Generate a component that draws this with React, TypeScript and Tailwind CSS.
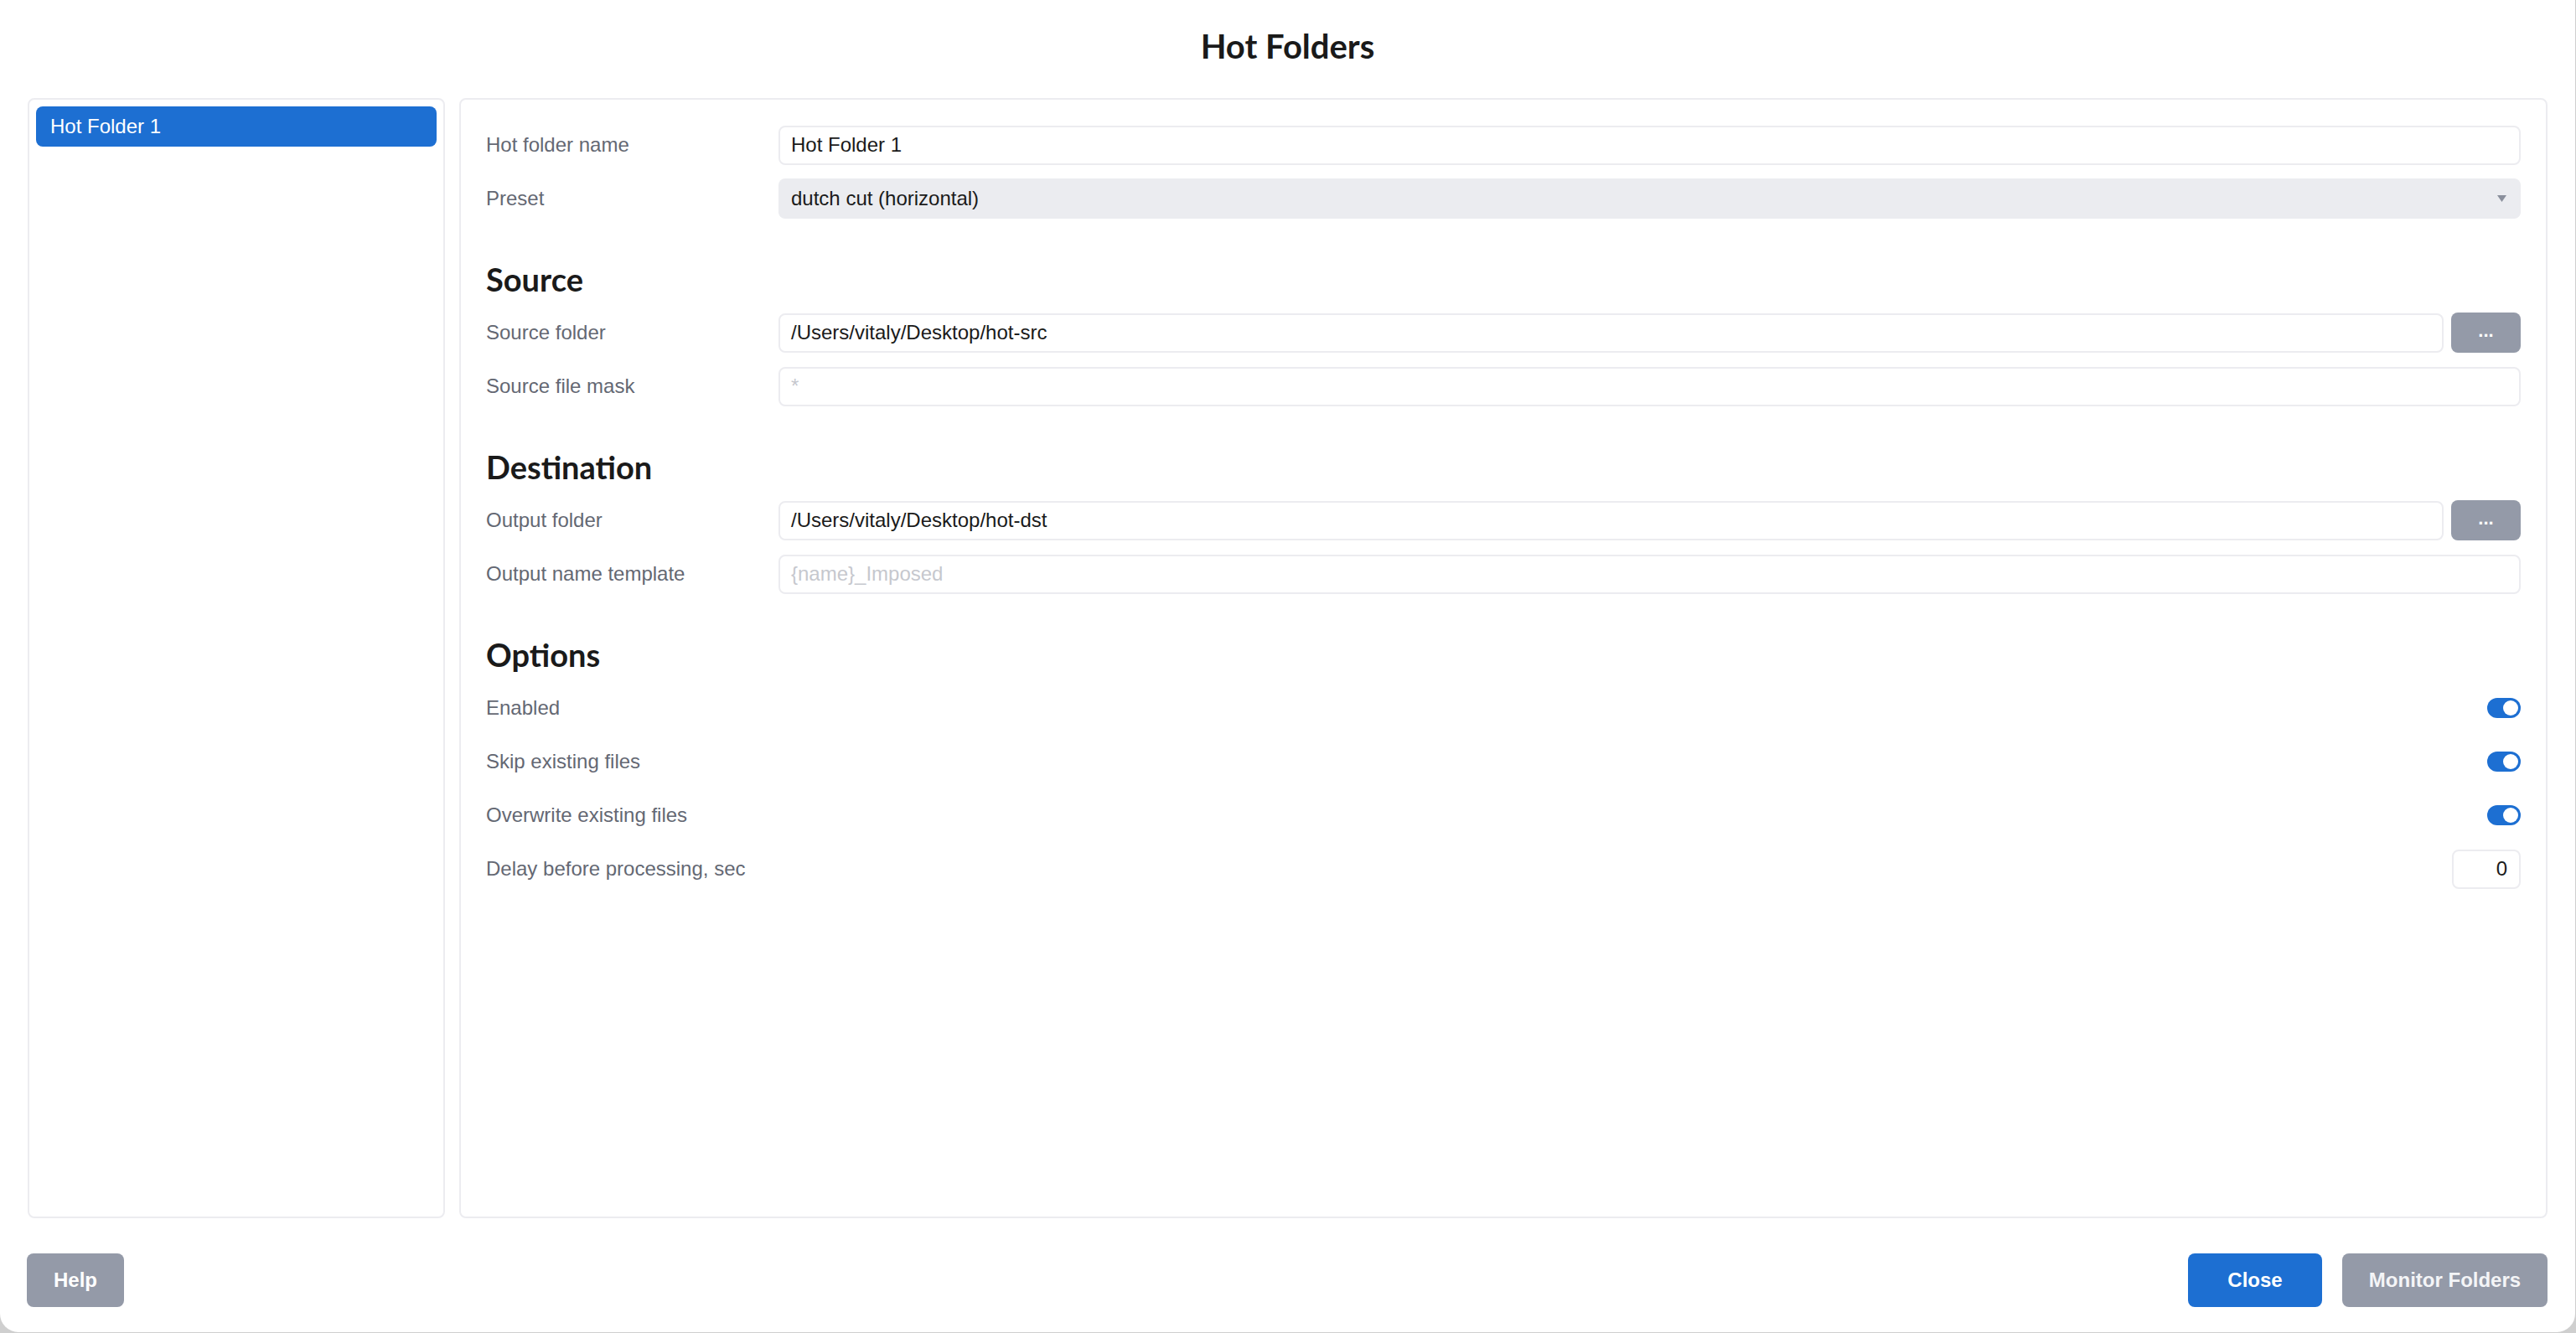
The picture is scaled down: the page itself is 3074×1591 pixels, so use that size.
import type { ReactNode } from 'react';

const sans = { fontFamily: '"Liberation Sans", Arial, sans-serif' };
const heading = { fontFamily: 'Lato, "Open Sans", sans-serif' };

function Row({ label, children }: { label: string; children: ReactNode }) {
  return (
    <div className="flex h-12 items-center">
      <div className="w-[349px] shrink-0 text-[24px] text-[#646873]">{label}</div>
      <div className="flex min-w-0 flex-1 items-center justify-end">{children}</div>
    </div>
  );
}

function TextInput({ value, placeholder }: { value?: string; placeholder?: string }) {
  return (
    <div className="flex h-[47px] flex-1 items-center rounded-[8px] border-2 border-[#ececf0] bg-white px-[13px] text-[24px]">
      {value ? (
        <span className="text-[#1a1a1a]">{value}</span>
      ) : (
        <span className="text-[#c6c8ce]">{placeholder}</span>
      )}
    </div>
  );
}

function BrowseButton() {
  return (
    <button
      type="button"
      className="ml-[9px] flex h-12 w-[83px] shrink-0 items-center justify-center rounded-[8px] bg-[#949aa8] pb-[6px] text-[22px] font-bold text-white"
    >
      ...
    </button>
  );
}

function Toggle() {
  return (
    <div className="relative h-6 w-10 rounded-full bg-[#1d6fd2]">
      <div className="absolute right-[3px] top-[3px] h-[18px] w-[18px] rounded-full bg-white" />
    </div>
  );
}

function SectionTitle({ children }: { children: ReactNode }) {
  return (
    <div className="mt-8 flex h-12 items-center">
      <h2 className="text-[38px] font-bold leading-none text-[#1a1a1a]" style={heading}>
        {children}
      </h2>
    </div>
  );
}

export default function App() {
  return (
    <div className="h-screen w-screen overflow-hidden bg-[#cfcfcf]" style={sans}>
      <div className="flex h-[1590px] w-[3073px] flex-col rounded-b-[22px] bg-white px-[33px]">
        <div className="flex h-[117px] shrink-0 items-center justify-center pb-[8px]">
          <h1 className="text-[40px] font-bold text-[#1a1a1a]" style={heading}>
            Hot Folders
          </h1>
        </div>

        <div className="flex min-h-0 flex-1 gap-[17px]">
          <aside className="w-[498px] shrink-0 rounded-[8px] border-2 border-[#ececf0] p-[8px]">
            <div className="flex h-12 items-center rounded-[8px] bg-[#1d6fd2] px-[17px] text-[24px] text-white">
              Hot Folder 1
            </div>
          </aside>

          <section className="flex flex-1 flex-col gap-4 rounded-[8px] border-2 border-[#ececf0] px-[30px] pt-[30px]">
            <Row label="Hot folder name">
              <TextInput value="Hot Folder 1" />
            </Row>
            <Row label="Preset">
              <div className="flex h-12 flex-1 items-center justify-between rounded-[8px] bg-[#ebecf0] pl-[15px] pr-[17px] text-[24px] text-[#1a1a1a]">
                <span>dutch cut (horizontal)</span>
                <svg width="11" height="8" viewBox="0 0 11 8">
                  <path d="M0 0 H11 L5.5 8 Z" fill="#8a8f9c" />
                </svg>
              </div>
            </Row>

            <SectionTitle>Source</SectionTitle>
            <Row label="Source folder">
              <TextInput value="/Users/vitaly/Desktop/hot-src" />
              <BrowseButton />
            </Row>
            <Row label="Source file mask">
              <TextInput placeholder="*" />
            </Row>

            <SectionTitle>Destination</SectionTitle>
            <Row label="Output folder">
              <TextInput value="/Users/vitaly/Desktop/hot-dst" />
              <BrowseButton />
            </Row>
            <Row label="Output name template">
              <TextInput placeholder="{name}_Imposed" />
            </Row>

            <SectionTitle>Options</SectionTitle>
            <Row label="Enabled">
              <Toggle />
            </Row>
            <Row label="Skip existing files">
              <Toggle />
            </Row>
            <Row label="Overwrite existing files">
              <Toggle />
            </Row>
            <Row label="Delay before processing, sec">
              <div className="flex h-[47px] w-[82px] items-center justify-end rounded-[8px] border-2 border-[#ececf0] pr-[14px] text-[24px] text-[#1a1a1a]">
                0
              </div>
            </Row>
          </section>
        </div>

        <div className="flex shrink-0 items-center justify-between pb-[30px] pt-[42px]">
          <button
            type="button"
            className="-ml-px h-16 w-[116px] rounded-[8px] bg-[#949aa8] text-[24px] font-bold text-white"
          >
            Help
          </button>
          <div className="flex gap-6">
            <button
              type="button"
              className="h-16 w-[160px] rounded-[8px] bg-[#1d6fd2] text-[24px] font-bold text-white"
            >
              Close
            </button>
            <button
              type="button"
              className="h-16 w-[245px] rounded-[8px] bg-[#949aa8] text-[24px] font-bold text-[#f4f5f7]"
            >
              Monitor Folders
            </button>
          </div>
        </div>
      </div>
    </div>
  );
}
